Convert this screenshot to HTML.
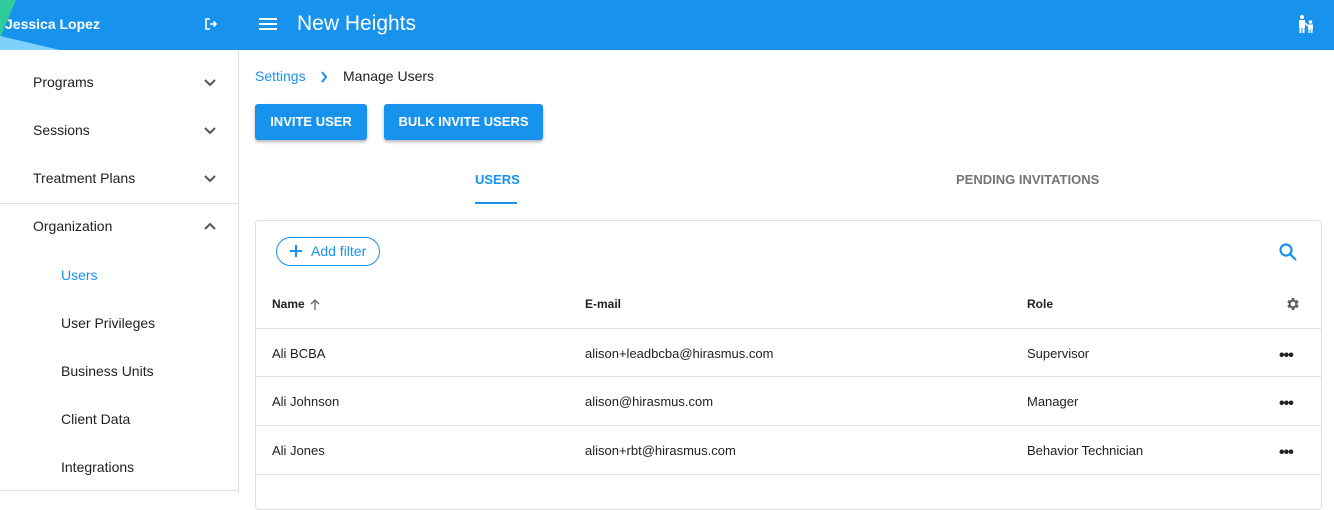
<!DOCTYPE html>
<html><head><style>
*{box-sizing:border-box;margin:0;padding:0}
body{width:1334px;height:493px;overflow:hidden;font-family:"Liberation Sans",Roboto,sans-serif;background:#fff;position:relative;color:#212121}
.top{position:absolute;left:0;top:0;width:1334px;height:50px;background:#1793ee}
.abs{position:absolute}
.side{position:absolute;left:0;top:50px;width:239px;height:443px;border-right:1px solid #e0e0e0}
.it{position:absolute;left:33px;font-size:14px;color:#212121}
.sub{position:absolute;left:61px;font-size:14px;color:#212121}
.chev{position:absolute;left:203px}
.hr{position:absolute;left:0;width:238px;height:1px;background:#e0e0e0}
.btn{position:absolute;top:104px;height:36px;background:#1793ee;color:#fff;font-size:13px;font-weight:bold;border-radius:3px;box-shadow:0 2px 3px rgba(0,0,0,.3);text-align:center;line-height:36px}
.card{position:absolute;left:255px;top:220px;width:1067px;height:290px;border:1px solid #e0e0e0;border-radius:4px}
.t{position:absolute;font-size:13px;color:#212121}
.th{font-weight:bold;font-size:12px}
.rl{position:absolute;left:0;width:1065px;height:1px;background:#e0e0e0}
.dots{position:absolute;left:1023px;font-size:16px;font-weight:bold;letter-spacing:-1px}
</style></head><body>
<div class="top">
<svg class="abs" style="left:0;top:0" width="240" height="50"><polygon points="0,0 16,0 0,38" fill="#2ecc9a"/><polygon points="0,36 0,50 60,50" fill="#7fd0fb"/></svg>
<div class="abs" style="left:5px;top:16px;color:#fff;font-weight:bold;font-size:14px">Jessica Lopez</div>
<svg class="abs" style="left:204px;top:17px" width="14" height="14" viewBox="0 0 14 14" fill="none" stroke="#fff" stroke-width="1.6"><path d="M6 2H2v10h4M6 7h6M9.5 4.5 12 7l-2.5 2.5"/></svg>
<svg class="abs" style="left:259px;top:17px" width="18" height="14"><rect y="1" width="18" height="2" fill="#fff"/><rect y="6" width="18" height="2" fill="#fff"/><rect y="11" width="18" height="2" fill="#fff"/></svg>
<div class="abs" style="left:297px;top:12px;color:#fff;font-size:21px">New Heights</div>
<svg class="abs" style="left:1297px;top:14px" width="20" height="22" viewBox="0 0 20 22" fill="#fff"><circle cx="5" cy="3" r="2"/><rect x="2" y="6" width="6" height="8"/><rect x="2.5" y="13" width="2" height="6"/><rect x="5.5" y="13" width="2" height="6"/><circle cx="13.5" cy="8" r="1.8"/><rect x="11" y="10.5" width="5" height="5"/><rect x="11.5" y="15" width="1.6" height="4"/><rect x="13.9" y="15" width="1.6" height="4"/><path d="M8 9l3 3" stroke="#fff" stroke-width="1.5"/></svg>
</div>
<div class="side">
<div class="it" style="top:24px">Programs</div>
<div class="it" style="top:72px">Sessions</div>
<div class="it" style="top:120px">Treatment Plans</div>
<div class="hr" style="top:153px"></div>
<div class="it" style="top:168px">Organization</div>
<div class="sub" style="top:217px;color:#1793ee">Users</div>
<div class="sub" style="top:265px">User Privileges</div>
<div class="sub" style="top:313px">Business Units</div>
<div class="sub" style="top:361px">Client Data</div>
<div class="sub" style="top:409px">Integrations</div>
<div class="hr" style="top:440px"></div>
<svg class="chev" style="top:28px" width="14" height="10" fill="none" stroke="#555" stroke-width="2"><path d="M2 2l5 5 5-5"/></svg>
<svg class="chev" style="top:76px" width="14" height="10" fill="none" stroke="#555" stroke-width="2"><path d="M2 2l5 5 5-5"/></svg>
<svg class="chev" style="top:124px" width="14" height="10" fill="none" stroke="#555" stroke-width="2"><path d="M2 2l5 5 5-5"/></svg>
<svg class="chev" style="top:171px" width="14" height="10" fill="none" stroke="#555" stroke-width="2"><path d="M2 8l5-5 5 5"/></svg>
</div>
<div class="abs" style="left:255px;top:68px;font-size:14px;color:#1793ee">Settings</div>
<svg class="abs" style="left:320px;top:71px" width="8" height="12" fill="none" stroke="#1793ee" stroke-width="2"><path d="M2 1l4 5-4 5"/></svg>
<div class="abs" style="left:343px;top:68px;font-size:14px">Manage Users</div>
<div class="btn" style="left:255px;width:112px">INVITE USER</div>
<div class="btn" style="left:384px;width:159px">BULK INVITE USERS</div>
<div class="abs" style="left:475px;top:172px;font-size:13px;color:#1793ee;font-weight:bold">USERS</div>
<div class="abs" style="left:475px;top:202px;width:42px;height:2px;background:#1793ee"></div>
<div class="abs" style="left:956px;top:172px;font-size:13px;color:#757575;font-weight:bold">PENDING INVITATIONS</div>
<div class="card">
<div class="abs" style="left:20px;top:16px;width:104px;height:29px;border:1px solid #1793ee;border-radius:15px;color:#1793ee;font-size:14px;line-height:27px;padding-left:34px">Add filter</div>
<svg class="abs" style="left:33px;top:23px" width="14" height="14" stroke="#1793ee" stroke-width="2"><path d="M7 1v12M1 7h12"/></svg>
<svg class="abs" style="left:1022px;top:21px" width="20" height="20" fill="none" stroke="#1793ee" stroke-width="2.2"><circle cx="8" cy="8" r="5.5"/><path d="M12 12l6 6"/></svg>
<div class="t th" style="left:16px;top:76px">Name</div>
<svg class="abs" style="left:54px;top:78px" width="10" height="11" fill="none" stroke="#666" stroke-width="1.3"><path d="M5 11V1M1 5l4-4 4 4"/></svg>
<div class="t th" style="left:329px;top:76px">E-mail</div>
<div class="t th" style="left:771px;top:76px">Role</div>
<svg class="abs" style="left:1029px;top:75px" width="16" height="16" viewBox="0 0 24 24" fill="#616161"><path d="M19.4 13a7.5 7.5 0 000-2l2.1-1.6-2-3.5-2.5 1a7.6 7.6 0 00-1.7-1L15 3h-4l-.4 2.9a7.6 7.6 0 00-1.7 1l-2.5-1-2 3.5L6.6 11a7.5 7.5 0 000 2l-2.1 1.6 2 3.5 2.5-1a7.6 7.6 0 001.7 1L11 21h4l.4-2.9a7.6 7.6 0 001.7-1l2.5 1 2-3.5zM13 15.5a3.5 3.5 0 110-7 3.5 3.5 0 010 7z" transform="translate(-1 0)"/></svg>
<div class="rl" style="top:107px"></div>
<div class="t" style="left:16px;top:125px">Ali BCBA</div><div class="t" style="left:329px;top:125px">alison+leadbcba@hirasmus.com</div><div class="t" style="left:771px;top:125px">Supervisor</div><div class="dots" style="top:126px">•••</div>
<div class="rl" style="top:155px"></div>
<div class="t" style="left:16px;top:173px">Ali Johnson</div><div class="t" style="left:329px;top:173px">alison@hirasmus.com</div><div class="t" style="left:771px;top:173px">Manager</div><div class="dots" style="top:174px">•••</div>
<div class="rl" style="top:204px"></div>
<div class="t" style="left:16px;top:222px">Ali Jones</div><div class="t" style="left:329px;top:222px">alison+rbt@hirasmus.com</div><div class="t" style="left:771px;top:222px">Behavior Technician</div><div class="dots" style="top:223px">•••</div>
<div class="rl" style="top:253px"></div>
</div>
</body></html>
